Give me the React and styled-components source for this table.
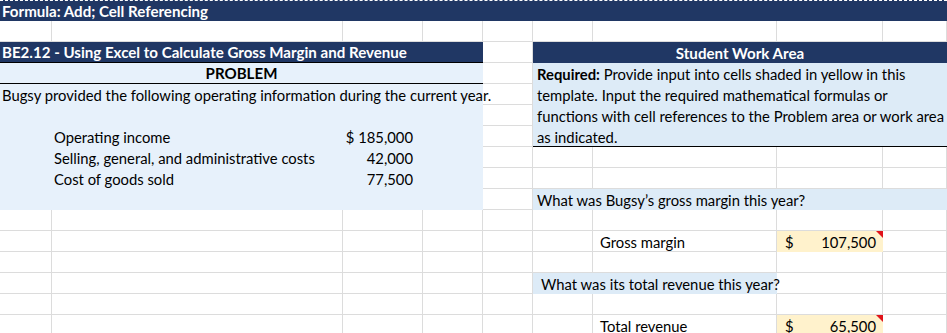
import React from 'react';
import styled, { createGlobalStyle } from 'styled-components';

const Global = createGlobalStyle`
html, body {
  margin: 0;
  padding: 0;
  background: #ffffff;
  overflow: hidden;
}
`;

const NAVY = '#203764';
const BLUE_L = '#E7F1FB';
const BLUE_R = '#DDEBF7';
const YELLOW = '#FFF2CC';
const GRID = '#DCDCDC';

const Sheet = styled.div`
display: grid;
grid-template-columns: 52px 291px 80px 60px 50px 60px 184px 106px 64px;
grid-auto-rows: 21px;
width: 947px;
font-family: Lato, "Open Sans", sans-serif;
font-size: 14.8px;
color: #000000;
`;

const Blank = styled.div`
grid-row: ${p => p.$r};
grid-column: ${p => p.$c};
border-right: 1px solid ${GRID};
border-bottom: 1px solid ${GRID};
background: #ffffff;
`;

const Cell = styled.div`
grid-row: ${p => p.$r} / span ${p => p.$rs || 1};
grid-column: ${p => p.$c} / span ${p => p.$cs || 1};
background: ${p => p.$bg || 'transparent'};
color: ${p => p.$color || '#000000'};
font-weight: ${p => (p.$bold ? 700 : 400)};
font-size: ${p => (p.$bold ? '15.1px' : 'inherit')};
display: flex;
align-items: flex-end;
justify-content: ${p => p.$align || 'flex-start'};
padding: 0 ${p => p.$pr ?? 2}px 0 ${p => p.$pl ?? 2}px;
border-bottom: ${p => (p.$line ? '1px solid #000000' : 'none')};
box-sizing: border-box;
white-space: nowrap;
line-height: 19px;
`;

const TopBar = styled(Cell)`
border-top: 1px dashed #ffffff;
`;

const Note = styled(Cell)`
flex-direction: column;
align-items: flex-start;
justify-content: flex-start;
padding: 1px 4px 0 4px;
line-height: 21px;
border-bottom: 1px solid #000000;
`;

const Input = styled(Cell)`
position: relative;
justify-content: space-between;
padding: 0 7px 0 8px;
&::after {
  content: '';
  position: absolute;
  top: 0;
  right: 0;
  border-top: 7px solid #E0131A;
  border-left: 7px solid transparent;
}
`;

const ROWS = 16;
const COLS = 9;

const lines = [
  ['Operating income', '$ 185,000'],
  ['Selling, general, and administrative costs', '42,000'],
  ['Cost of goods sold', '77,500'],
];

export default function App() {
  const blanks = [];
  for (let r = 1; r <= ROWS; r++) {
    for (let c = 1; c <= COLS; c++) {
      blanks.push(<Blank key={`${r}-${c}`} $r={r} $c={c} />);
    }
  }

  return (
    <>
      <Global />
      <Sheet>
        {blanks}

        <TopBar $r={1} $c={1} $cs={9} $bg={NAVY} $color="#ffffff" $bold>
          Formula: Add; Cell Referencing
        </TopBar>

        <Cell $r={3} $c={1} $cs={4} $bg={NAVY} $color="#ffffff" $bold $line>
          BE2.12 - Using Excel to Calculate Gross Margin and Revenue
        </Cell>
        <Cell $r={3} $c={6} $cs={4} $bg={NAVY} $color="#ffffff" $bold $align="center">
          Student Work Area
        </Cell>

        <Cell $r={4} $c={1} $cs={4} $bg={BLUE_L} $bold $align="center" $line>
          PROBLEM
        </Cell>
        <Cell $r={5} $c={1} $cs={4} $rs={6} $bg={BLUE_L} />
        <Cell $r={5} $c={1} $cs={4}>
          Bugsy provided the following operating information during the current year.
        </Cell>
        {lines.map(([label, value], i) => (
          <React.Fragment key={label}>
            <Cell $r={7 + i} $c={2}>{label}</Cell>
            <Cell $r={7 + i} $c={3} $align="flex-end" $pr={10}>{value}</Cell>
          </React.Fragment>
        ))}

        <Note $r={4} $c={6} $cs={4} $rs={4} $bg={BLUE_R}>
          <span><b>Required:</b> Provide input into cells shaded in yellow in this</span>
          <span>template. Input the required mathematical formulas or</span>
          <span>functions with cell references to the Problem area or work area</span>
          <span>as indicated.</span>
        </Note>

        <Cell $r={10} $c={6} $cs={4} $bg={BLUE_R} $pl={4}>
          What was Bugsy’s gross margin this year?
        </Cell>
        <Cell $r={12} $c={7} $pl={7}>Gross margin</Cell>
        <Input $r={12} $c={8} $bg={YELLOW}>
          <span>$</span>
          <span>107,500</span>
        </Input>

        <Cell $r={14} $c={6} $cs={2} $bg={BLUE_R} $pl={8}>
          What was its total revenue this year?
        </Cell>
        <Cell $r={16} $c={7} $pl={7}>Total revenue</Cell>
        <Input $r={16} $c={8} $bg={YELLOW}>
          <span>$</span>
          <span>65,500</span>
        </Input>
      </Sheet>
    </>
  );
}
